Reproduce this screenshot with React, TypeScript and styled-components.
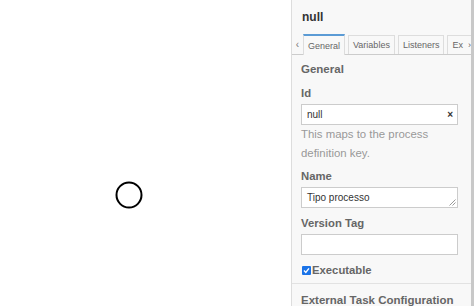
import React from "react";
import styled, { createGlobalStyle } from "styled-components";

const Global = createGlobalStyle`
  html, body { margin: 0; padding: 0; background: #fff; }
  body { font-family: "Liberation Sans", Arial, sans-serif; overflow: hidden; }
`;

const Shell = styled.div`
  display: flex;
  width: 474px;
  height: 306px;
  overflow: hidden;
`;

const Canvas = styled.div`
  position: relative;
  flex: 1;
  background: #fff;
`;

const Diagram = styled.svg`
  position: absolute;
  inset: 0;
`;

const Panel = styled.aside`
  width: 182px;
  flex-shrink: 0;
  display: flex;
  background: #f8f8f8;
  border-left: 1px solid #ddd;
`;

const PanelBody = styled.div`
  flex: 1;
  min-width: 0;
  overflow: hidden;
`;

const Scrollbar = styled.div`
  width: 3px;
  flex-shrink: 0;
  background: #c8c8c8;
`;

const Title = styled.div`
  height: 34px;
  line-height: 34px;
  padding-left: 10px;
  font-size: 12px;
  font-weight: bold;
  color: #333;
`;

const TabBar = styled.div`
  display: flex;
  align-items: flex-end;
  height: 20px;
  border-bottom: 1px solid #ccc;
  white-space: nowrap;
`;

const Chevron = styled.span`
  width: 11px;
  flex-shrink: 0;
  align-self: center;
  text-align: center;
  font-size: 10px;
  color: #777;
`;

const Tab = styled.div<{ $active?: boolean }>`
  flex-shrink: 0;
  box-sizing: border-box;
  margin-right: 3px;
  padding: 0 4px;
  display: flex;
  align-items: center;
  font-size: 9px;
  color: #666;
  background: #f8f8f8;
  border: 1px solid #ddd;
  border-bottom: none;
  border-top: ${(p) => (p.$active ? "2px solid #5b9bd5" : "1px solid #ddd")};
  height: ${(p) => (p.$active ? "21px" : "19px")};
  margin-bottom: ${(p) => (p.$active ? "-1px" : "0")};
`;

const TabEnd = styled(Tab)`
  gap: 5px;
  margin-right: 0;
  border-right: none;
`;

const Group = styled.section<{ $divided?: boolean }>`
  padding: ${(p) => (p.$divided ? "9px 13px 0 9px" : "7px 13px 6px 9px")};
  border-top: ${(p) => (p.$divided ? "1px solid #e2e2e2" : "none")};
`;

const GroupTitle = styled.div`
  font-size: 11.5px;
  line-height: 14px;
  font-weight: bold;
  color: #666;
  margin-bottom: 10px;
  white-space: nowrap;
`;

const Field = styled.div`
  margin-bottom: 8px;
`;

const Label = styled.div`
  font-size: 11.3px;
  line-height: 14px;
  font-weight: bold;
  color: #666;
  margin-bottom: 4px;
`;

const InputBox = styled.div`
  position: relative;
  height: 21px;
  box-sizing: border-box;
  background: #fff;
  border: 1px solid #ccc;
  display: flex;
  align-items: center;
  padding: 0 4px 0 5px;
  font-size: 10px;
  color: #333;
`;

const Clear = styled.span`
  margin-left: auto;
  font-size: 10px;
  font-weight: bold;
  color: #333;
`;

const Grip = styled.svg`
  position: absolute;
  right: 1px;
  bottom: 1px;
`;

const Description = styled.div`
  margin: 0 0 -2px;
  font-size: 11.4px;
  line-height: 19px;
  color: #999;
`;

const CheckRow = styled.label`
  display: flex;
  align-items: center;
  font-size: 11.3px;
  line-height: 14px;
  font-weight: bold;
  color: #666;
`;

const Check = styled.span`
  width: 9px;
  height: 9px;
  flex-shrink: 0;
  background: #1a73e8;
  border-radius: 1px;
  display: flex;
  align-items: center;
  justify-content: center;
  margin: 1px 1px 0 1px;
`;

export default function App() {
  return (
    <>
      <Global />
      <Shell>
        <Canvas>
          <Diagram width="291" height="306">
            <circle cx="129" cy="195" r="12.5" fill="#fff" stroke="#000" strokeWidth="2" />
          </Diagram>
        </Canvas>
        <Panel>
          <PanelBody>
            <Title>null</Title>
            <TabBar>
              <Chevron>‹</Chevron>
              <Tab $active>General</Tab>
              <Tab>Variables</Tab>
              <Tab>Listeners</Tab>
              <TabEnd>
                <span>Ex</span>
                <span>›</span>
              </TabEnd>
            </TabBar>
            <Group>
              <GroupTitle>General</GroupTitle>
              <Field>
                <Label>Id</Label>
                <InputBox>
                  null
                  <Clear>×</Clear>
                </InputBox>
                <Description>This maps to the process definition key.</Description>
              </Field>
              <Field>
                <Label>Name</Label>
                <InputBox>
                  Tipo processo
                  <Grip width="7" height="7" viewBox="0 0 7 7">
                    <path d="M6.5 0.5 L0.5 6.5 M6.5 3.5 L3.5 6.5" stroke="#999" strokeWidth="1" />
                  </Grip>
                </InputBox>
              </Field>
              <Field>
                <Label>Version Tag</Label>
                <InputBox />
              </Field>
              <CheckRow>
                <Check>
                  <svg width="7" height="7" viewBox="0 0 7 7">
                    <path d="M1 3.6 L2.8 5.4 L6 1.4" stroke="#fff" strokeWidth="1.4" fill="none" />
                  </svg>
                </Check>
                Executable
              </CheckRow>
            </Group>
            <Group $divided>
              <GroupTitle>External Task Configuration</GroupTitle>
            </Group>
          </PanelBody>
          <Scrollbar />
        </Panel>
      </Shell>
    </>
  );
}
